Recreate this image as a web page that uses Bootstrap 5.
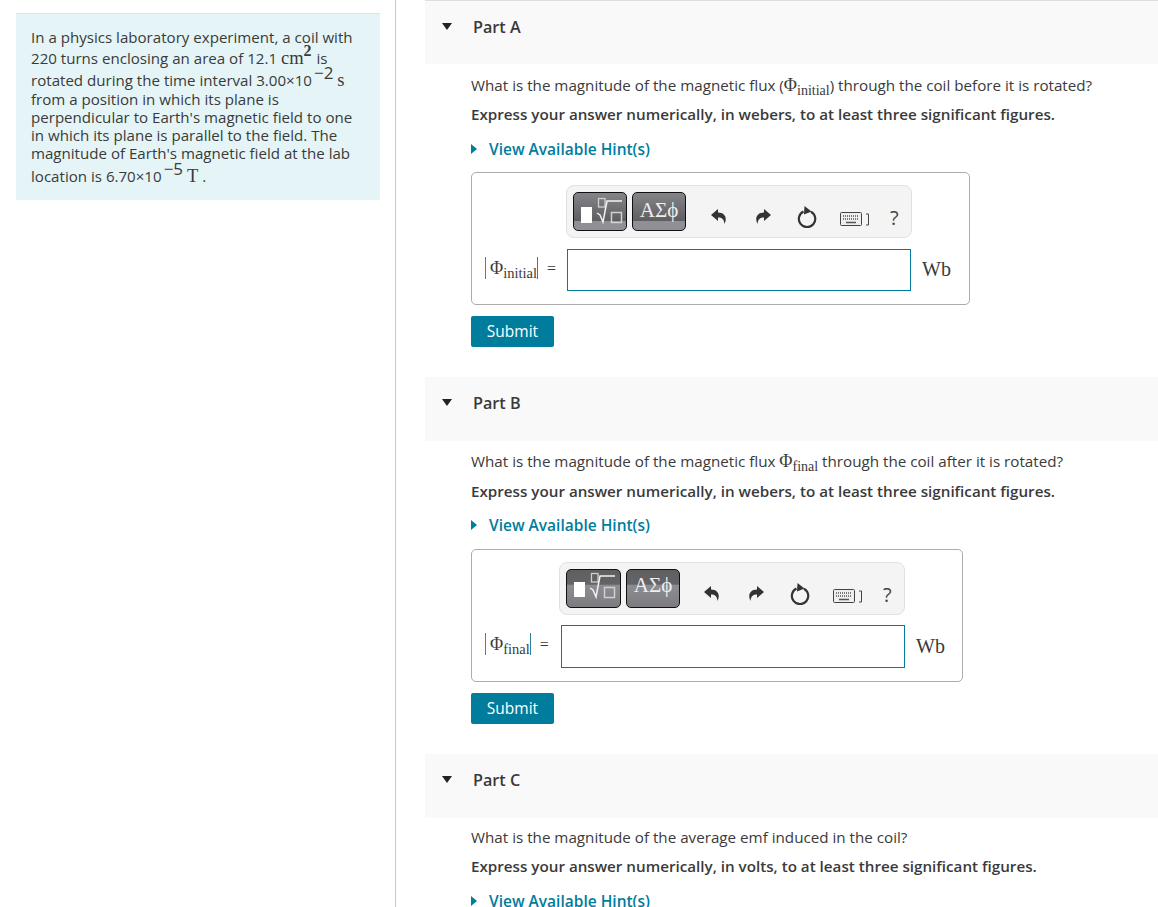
<!DOCTYPE html>
<html lang="en">
<head>
  <meta charset="UTF-8" />
  <meta name="viewport" content="width=device-width, initial-scale=1" />
  <title>Physics problem</title>
  <link rel="stylesheet" href="https://cdn.jsdelivr.net/npm/bootstrap@5.3.0/dist/css/bootstrap.min.css" />
  <style>
    html, body { height: 907px; overflow: hidden; }
    body { font-family: "Open Sans", "Liberation Sans", sans-serif; font-size: 15.2px; color: #3a3a3a; background: #fff; }
    .page-wrap { height: 907px; }
    .side-col { width: 396px; flex: none; border-right: 1px solid #c8c8c8; padding: 13px 15px 0 16px; height: 907px; }
    .intro-box { background: #e5f5f7; border-top: 1px solid #dde3e5; padding: 14px 14px 0 15px; height: 187px; font-size: 15.1px; line-height: 18px; }
    .intro-box .ln { display: block; white-space: nowrap; }
    .ln-area { line-height: 24px; height: 24px; }
    .ln-time { line-height: 20px; height: 20px; }
    .ln-last { line-height: 28px; height: 28px; }
    .tex { font-family: "Liberation Serif", serif; font-size: 18.5px; }
    .tex-sup { font-size: 17px; top: -0.42em; line-height: 0; margin-left: 2px; }
    .tex-sup-serif { font-family: "Liberation Serif", serif; font-weight: 700; font-size: 16px; top: -0.5em; line-height: 0; margin-right: 1px; }
    .main-col { flex: 1; padding-left: 29px; min-width: 0; }
    .part-head { background: #f9f9f9; height: 64px; padding: 14px 0 0 17px; font-size: 16.2px; font-weight: 600; line-height: 24px; gap: 21px; }
    .first-head { border-top: 1px solid #dedede; }
    .tri-down { width: 0; height: 0; border-left: 5.5px solid transparent; border-right: 5.5px solid transparent; border-top: 7px solid #222; margin-top: 8px; }
    .part-body { padding-left: 46px; }
    .q-line { height: 22px; line-height: 22px; white-space: nowrap; }
    .q-bold { font-weight: 600; height: 22px; line-height: 22px; white-space: nowrap; }
    .hint-line { color: #007c9d; font-weight: 600; font-size: 15.5px; height: 22px; line-height: 22px; gap: 12px; }
    .tri-right { width: 0; height: 0; border-top: 5.5px solid transparent; border-bottom: 5.5px solid transparent; border-left: 6.5px solid #007c9d; }
    .answer-box { border: 1px solid #acacac; border-radius: 5px; height: 133px; padding-top: 12px; }
    .box-a { width: 499px; padding-left: 94px; }
    .box-b { width: 492px; padding-left: 87px; }
    .tool-bar { width: 346px; height: 53px; background: #f4f4f4; border: 1px solid #e0e0e0; border-radius: 8px; padding: 6px 0 0 6px; }
    .math-btn { height: 39px; border: 1px solid #111; border-radius: 5px; background: linear-gradient(#858489 0, #5e5e60 76%, #908f97 77%, #908f97 100%); color: #eee; font-family: "Liberation Serif", serif; font-size: 21px; line-height: 34px; text-align: center; display: flex; justify-content: center; flex: none; }
    .box-b .math-btn { background: linear-gradient(#5f5f61 0, #646466 38%, #8c8c92 42%, #7c7c80 100%); line-height: 30px; }
    .btn-tpl { width: 54px; margin-right: 5px; }
    .box-b .btn-tpl { width: 55px; }
    .btn-sym { width: 54px; margin-right: 25px; }
    .box-b .btn-sym { margin-right: 24px; }
    .ico-undo { margin-top: 16px; margin-right: 28px; flex: none; }
    .ico-redo { margin-top: 16px; margin-right: 26px; flex: none; }
    .ico-reload { margin-top: 14px; margin-right: 23px; flex: none; }
    .ico-keys { margin-top: 20px; margin-right: 20px; flex: none; }
    .help-mark { font-size: 20px; color: #444; line-height: 24px; margin-top: 14px; flex: none; }
    .ans-row { margin-top: 11px; margin-left: -81px; }
    .box-b .ans-row { margin-left: -74px; margin-top: 10px; }
    .ans-label { width: 82px; flex: none; font-family: "Liberation Serif", serif; font-size: 18px; white-space: nowrap; padding-bottom: 4px; }
    .box-b .ans-label { width: 76px; }
    .ans-label sub { font-size: 14.5px; font-weight: 400; bottom: -0.3em; }
    .bar-l { border-left: 1px solid #b55a3c; display: inline-block; height: 22px; vertical-align: -5px; margin-right: 4px; }
    .bar-r { border-left: 1px solid #2f7f9f; display: inline-block; height: 22px; vertical-align: -5px; }
    .eq-sign { margin-left: 9px; font-size: 16px; }
    .ans-input { width: 344px; height: 42px; flex: none; border: 1px solid #007c9d; border-radius: 0; background: #fff; }
    .box-b .ans-input { height: 43px; }
    .ans-input:focus { outline: none; box-shadow: none; }
    .unit-txt { font-family: "Liberation Serif", serif; font-size: 20px; margin-left: 11px; padding-bottom: 2px; }
    .submit-btn { background: #007c9d; border: 0; border-radius: 2px; color: #fff; font-size: 15.5px; font-weight: 500; width: 83px; height: 31px; margin-bottom: 1px; padding: 0; line-height: 31px; }
    .submit-btn:hover { background: #007c9d; color: #fff; }
    .tex-inline { font-family: "Liberation Serif", serif; font-size: 18px; }
    .tex-inline sub { font-size: 14px; bottom: -0.3em; }
  </style>
</head>
<body>
  <div class="d-flex page-wrap">
    <!-- problem text -->
    <div class="side-col">
      <div class="intro-box">
        <span class="ln">In a physics laboratory experiment, a coil with</span>
        <span class="ln ln-area">220 turns enclosing an area of 12.1 <span class="tex">cm<sup class="tex-sup-serif">2</sup></span> is</span>
        <span class="ln ln-time">rotated during the time interval 3.00×10<sup class="tex-sup">−2</sup> <span class="tex">s</span></span>
        <span class="ln">from a position in which its plane is</span>
        <span class="ln">perpendicular to Earth's magnetic field to one</span>
        <span class="ln">in which its plane is parallel to the field. The</span>
        <span class="ln">magnitude of Earth's magnetic field at the lab</span>
        <span class="ln ln-last">location is 6.70×10<sup class="tex-sup">−5</sup> <span class="tex">T</span> .</span>
      </div>
    </div>

    <div class="main-col">
      <!-- Part A -->
      <div class="part-head first-head d-flex"><span class="tri-down"></span><span>Part A</span></div>
      <div class="part-body">
        <div class="q-line" style="margin-top:10px">What is the magnitude of the magnetic flux (<span class="tex-inline">Φ<sub>initial</sub></span>) through the coil before it is rotated?</div>
        <div class="q-bold" style="margin-top:7px">Express your answer numerically, in webers, to at least three significant figures.</div>
        <div class="hint-line d-flex align-items-center" style="margin-top:13px"><span class="tri-right"></span><span>View Available Hint(s)</span></div>
        <div class="answer-box box-a" style="margin-top:12px">
          <div class="tool-bar d-flex">
            <div class="math-btn btn-tpl">
              <svg width="52" height="37" viewBox="0 0 52 37"><rect x="7" y="14" width="11" height="16" fill="#fff"/><rect x="24.5" y="5.5" width="6.500" height="8.500" fill="none" stroke="#d0d0d0" stroke-width="1.3"/><path d="M23 20l3 2 3 7 4-21h15" fill="none" stroke="#f2f2f2" stroke-width="1.5"/><rect x="37.5" y="19.5" width="10" height="10" fill="none" stroke="#d0d0d0" stroke-width="1.5"/></svg>
            </div>
            <div class="math-btn btn-sym">ΑΣϕ</div>
            <svg class="ico-undo" width="16" height="17" viewBox="0 0 16 17"><path d="M7 1L0 7l7 6V9.500c4 0 6 1.500 6.500 6.500C16.500 10 14 4.500 7 4.500z" fill="#333"/></svg>
            <svg class="ico-redo" width="16" height="17" viewBox="0 0 16 17"><path d="M9 1l7 6-7 6V9.500c-4 0-6 1.500-6.500 6.500C-.5 10 2 4.500 9 4.500z" fill="#333"/></svg>
            <svg class="ico-reload" width="20" height="22" viewBox="0 0 20 22"><path d="M6.500 5.500a8.200 8.200 0 1 0 7.500.2" fill="none" stroke="#333" stroke-width="2.200"/><path d="M7.500 0l7 5.500-7.500 3z" fill="#333"/></svg>
            <svg class="ico-keys" width="30" height="15" viewBox="0 0 30 15"><rect x=".5" y=".5" width="21" height="13" rx="1" fill="#eee" stroke="#444"/><path d="M3 4h16M3 7h16" stroke="#555" stroke-dasharray="1 1" stroke-width="1.500"/><path d="M6 10.500h10" stroke="#555" stroke-width="1.500"/><path d="M26 2h2.500v11H26" fill="none" stroke="#444"/></svg>
            <div class="help-mark">?</div>
          </div>
          <div class="ans-row d-flex align-items-center">
            <div class="ans-label"><span class="bar-l"></span>Φ<sub>initial</sub><span class="bar-r"></span><span class="eq-sign">=</span></div>
            <input class="ans-input form-control" type="text" aria-label="Phi initial" />
            <span class="unit-txt">Wb</span>
          </div>
        </div>
        <button class="btn submit-btn" style="margin-top:11px" type="button">Submit</button>
      </div>

      <!-- Part B -->
      <div class="part-head d-flex" style="margin-top:29px"><span class="tri-down"></span><span>Part B</span></div>
      <div class="part-body">
        <div class="q-line" style="margin-top:9px">What is the magnitude of the magnetic flux <span class="tex-inline">Φ<sub>final</sub></span> through the coil after it is rotated?</div>
        <div class="q-bold" style="margin-top:8px">Express your answer numerically, in webers, to at least three significant figures.</div>
        <div class="hint-line d-flex align-items-center" style="margin-top:12px"><span class="tri-right"></span><span>View Available Hint(s)</span></div>
        <div class="answer-box box-b" style="margin-top:13px">
          <div class="tool-bar d-flex">
            <div class="math-btn btn-tpl">
              <svg width="53" height="37" viewBox="0 0 53 37"><rect x="7" y="12" width="11" height="15" fill="#fff"/><rect x="24.5" y="3.5" width="6.500" height="8.500" fill="none" stroke="#d0d0d0" stroke-width="1.3"/><path d="M23 18l3 2 3 7 4-21h15" fill="none" stroke="#f2f2f2" stroke-width="1.5"/><rect x="37.5" y="17.5" width="10" height="10" fill="none" stroke="#d0d0d0" stroke-width="1.5"/></svg>
            </div>
            <div class="math-btn btn-sym">ΑΣϕ</div>
            <svg class="ico-undo" width="16" height="17" viewBox="0 0 16 17"><path d="M7 1L0 7l7 6V9.500c4 0 6 1.500 6.500 6.500C16.500 10 14 4.500 7 4.500z" fill="#333"/></svg>
            <svg class="ico-redo" width="16" height="17" viewBox="0 0 16 17"><path d="M9 1l7 6-7 6V9.500c-4 0-6 1.500-6.500 6.500C-.5 10 2 4.500 9 4.500z" fill="#333"/></svg>
            <svg class="ico-reload" width="20" height="22" viewBox="0 0 20 22"><path d="M6.500 5.500a8.200 8.200 0 1 0 7.500.2" fill="none" stroke="#333" stroke-width="2.200"/><path d="M7.500 0l7 5.500-7.500 3z" fill="#333"/></svg>
            <svg class="ico-keys" width="30" height="15" viewBox="0 0 30 15"><rect x=".5" y=".5" width="21" height="13" rx="1" fill="#eee" stroke="#444"/><path d="M3 4h16M3 7h16" stroke="#555" stroke-dasharray="1 1" stroke-width="1.500"/><path d="M6 10.500h10" stroke="#555" stroke-width="1.500"/><path d="M26 2h2.500v11H26" fill="none" stroke="#444"/></svg>
            <div class="help-mark">?</div>
          </div>
          <div class="ans-row d-flex align-items-center">
            <div class="ans-label"><span class="bar-l"></span>Φ<sub>final</sub><span class="bar-r"></span><span class="eq-sign">=</span></div>
            <input class="ans-input form-control" type="text" aria-label="Phi final" />
            <span class="unit-txt">Wb</span>
          </div>
        </div>
        <button class="btn submit-btn" style="margin-top:11px" type="button">Submit</button>
      </div>

      <!-- Part C -->
      <div class="part-head d-flex" style="margin-top:29px"><span class="tri-down"></span><span>Part C</span></div>
      <div class="part-body">
        <div class="q-line" style="margin-top:8px">What is the magnitude of the average emf induced in the coil?</div>
        <div class="q-bold" style="margin-top:7px">Express your answer numerically, in volts, to at least three significant figures.</div>
        <div class="hint-line d-flex align-items-center" style="margin-top:13px"><span class="tri-right"></span><span>View Available Hint(s)</span></div>
      </div>
    </div>
  </div>
  <script src="https://cdn.jsdelivr.net/npm/bootstrap@5.3.0/dist/js/bootstrap.bundle.min.js"></script>
</body>
</html>
